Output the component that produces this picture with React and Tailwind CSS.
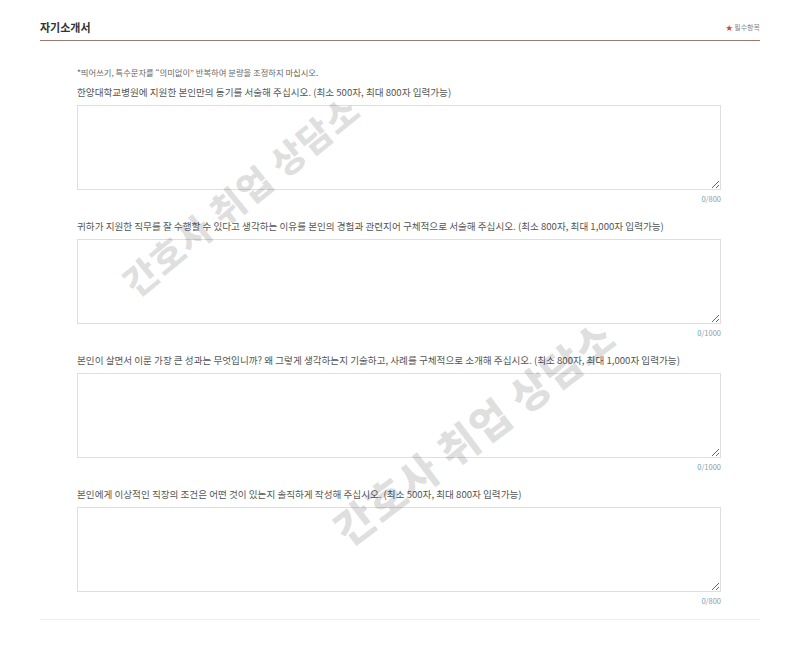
import { useState } from "react";

const QUESTIONS = [
  { label: "한양대학교병원에 지원한 본인만의 동기를 서술해 주십시오. (최소 500자, 최대 800자 입력가능)", max: 800 },
  { label: "귀하가 지원한 직무를 잘 수행할 수 있다고 생각하는 이유를 본인의 경험과 관련지어 구체적으로 서술해 주십시오. (최소 800자, 최대 1,000자 입력가능)", max: 1000 },
  { label: "본인이 살면서 이룬 가장 큰 성과는 무엇입니까? 왜 그렇게 생각하는지 기술하고, 사례를 구체적으로 소개해 주십시오. (최소 800자, 최대 1,000자 입력가능)", max: 1000 },
  { label: "본인에게 이상적인 직장의 조건은 어떤 것이 있는지 솔직하게 작성해 주십시오. (최소 500자, 최대 800자 입력가능)", max: 800 },
];

function Question({ label, max, first }) {
  const [value, setValue] = useState("");
  return (
    <div className={first ? "mt-[7px]" : "mt-[15px]"}>
      <p className="text-[9.6px] leading-[14px] text-[#555] whitespace-nowrap">{label}</p>
      <textarea
        value={value}
        maxLength={max}
        onChange={(e) => setValue(e.target.value)}
        className="mt-[6px] block w-full h-[85px] border border-[#dedede] bg-white outline-none"
      />
      <div className="mt-[4px] h-[10px] text-right text-[7.5px] leading-[10px] text-[#999]">
        <span className="text-[#5fa3c4]">{value.length}</span>/{max}
      </div>
    </div>
  );
}

export default function App() {
  return (
    <div className="relative w-[800px] h-[649px] overflow-hidden bg-white font-['Noto_Sans_CJK_KR','Noto_Sans',sans-serif]">
      <div className="mx-[40px] pt-[19px]">
        <div className="flex items-end justify-between border-b border-[#9c7a70] pb-[5px]">
          <h2 className="text-[11px] leading-[16px] font-semibold text-[#333]">자기소개서</h2>
          <span className="text-[7px] leading-[12px] text-[#888] mb-[2px]">
            <span className="text-[#d9403a]">★</span> 필수항목
          </span>
        </div>
      </div>

      <div className="ml-[77px] mr-[79px] mt-[25px]">
        <p className="text-[8.3px] leading-[12px] text-[#666]">
          *띄어쓰기, 특수문자를 “의미없이” 반복하여 분량을 조정하지 마십시오.
        </p>
        {QUESTIONS.map((q, i) => (
          <Question key={q.label} first={i === 0} {...q} />
        ))}
      </div>

      <div className="mx-[40px] mt-[13px] border-t border-[#efefef]" />

      {/* watermark */}
      <div className="pointer-events-none absolute left-[240px] top-[194px] -translate-x-1/2 -translate-y-1/2 -rotate-[39deg] whitespace-nowrap text-[36px] font-black tracking-[1px] text-black/[0.13]">
        간호사 취업 상담소
      </div>
      <div className="pointer-events-none absolute left-[473px] top-[431px] -translate-x-1/2 -translate-y-1/2 -rotate-[37deg] whitespace-nowrap text-[42px] font-black tracking-[1px] text-black/[0.13]">
        간호사 취업 상담소
      </div>
    </div>
  );
}
